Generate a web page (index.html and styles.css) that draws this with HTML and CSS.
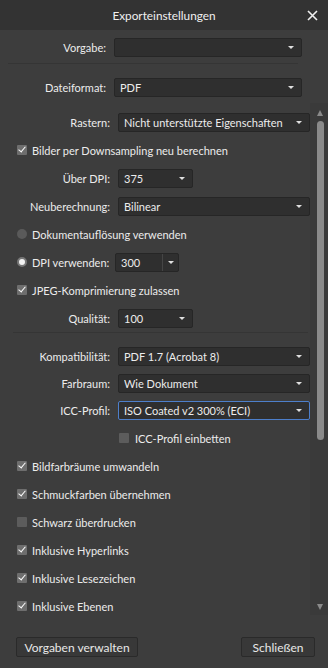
FILE: index.html
```html
<!DOCTYPE html>
<html>
<head>
<meta charset="utf-8">
<link rel="stylesheet" href="styles.css">
</head>
<body>
<div class="dialog">
  <div class="titlebar">
    <span class="title">Exporteinstellungen</span>
    <svg class="close" width="11" height="11" viewBox="0 0 11 11"><path d="M1 1L10 10M10 1L1 10" stroke="#f0f0f0" stroke-width="1.6"/></svg>
  </div>

  <div class="top">
    <div class="row trow">
      <span class="lbl tlbl">Vorgabe:</span>
      <div class="select tsel"><span class="val"></span><i class="arr"></i></div>
    </div>
    <div class="sep sep-top"></div>
    <div class="row trow trow2">
      <span class="lbl tlbl">Dateiformat:</span>
      <div class="select tsel"><span class="val">PDF</span><i class="arr"></i></div>
    </div>
  </div>

  <div class="scrollwrap">
    <div class="content">
      <div class="row">
        <span class="lbl">Rastern:</span>
        <div class="select wide"><span class="val">Nicht unterstützte Eigenschaften</span><i class="arr"></i></div>
      </div>
      <div class="row">
        <span class="cb on"></span><span class="txt">Bilder per Downsampling neu berechnen</span>
      </div>
      <div class="row">
        <span class="lbl">Über DPI:</span>
        <div class="select short"><span class="val">375</span><i class="arr"></i></div>
      </div>
      <div class="row">
        <span class="lbl">Neuberechnung:</span>
        <div class="select wide"><span class="val">Bilinear</span><i class="arr"></i></div>
      </div>
      <div class="row">
        <span class="rb"></span><span class="txt">Dokumentauflösung verwenden</span>
      </div>
      <div class="row">
        <span class="rb on"></span><span class="txt dpil">DPI verwenden:</span>
        <div class="combo"><span class="val">300</span><span class="cbtn"><i class="arr"></i></span></div>
      </div>
      <div class="row">
        <span class="cb on"></span><span class="txt">JPEG-Komprimierung zulassen</span>
      </div>
      <div class="row">
        <span class="lbl">Qualität:</span>
        <div class="select short"><span class="val">100</span><i class="arr"></i></div>
      </div>
      <div class="sep sep-mid"></div>
      <div class="row r27">
        <span class="lbl">Kompatibilität:</span>
        <div class="select wide"><span class="val">PDF 1.7 (Acrobat 8)</span><i class="arr"></i></div>
      </div>
      <div class="row r27">
        <span class="lbl">Farbraum:</span>
        <div class="select wide"><span class="val">Wie Dokument</span><i class="arr"></i></div>
      </div>
      <div class="row r27">
        <span class="lbl">ICC-Profil:</span>
        <div class="select wide focus"><span class="val">ISO Coated v2 300% (ECI)</span><i class="arr"></i></div>
      </div>
      <div class="row indent">
        <span class="cb"></span><span class="txt">ICC-Profil einbetten</span>
      </div>
      <div class="row">
        <span class="cb on"></span><span class="txt">Bildfarbräume umwandeln</span>
      </div>
      <div class="row">
        <span class="cb on"></span><span class="txt">Schmuckfarben übernehmen</span>
      </div>
      <div class="row">
        <span class="cb"></span><span class="txt">Schwarz überdrucken</span>
      </div>
      <div class="row">
        <span class="cb on"></span><span class="txt">Inklusive Hyperlinks</span>
      </div>
      <div class="row">
        <span class="cb on"></span><span class="txt">Inklusive Lesezeichen</span>
      </div>
      <div class="row">
        <span class="cb on"></span><span class="txt">Inklusive Ebenen</span>
      </div>
    </div>
    <div class="scrollbar">
      <i class="sarr up"></i>
      <div class="thumb"></div>
      <i class="sarr down"></i>
    </div>
  </div>

  <div class="footer">
    <button class="btn btn-l">Vorgaben verwalten</button>
    <button class="btn btn-r">Schließen</button>
  </div>
</div>
</body>
</html>
```
FILE: styles.css
```css
html, body {
  margin: 0;
  padding: 0;
  background: #3d3d3d;
}
body {
  font-family: Lato, "Open Sans", sans-serif;
  font-size: 11px;
  color: #ececec;
  width: 328px;
  height: 668px;
  overflow: hidden;
}
.dialog {
  display: flex;
  flex-direction: column;
  height: 668px;
}
.titlebar {
  height: 30px;
  flex: none;
  background: #333333;
  display: flex;
  align-items: center;
  justify-content: center;
  position: relative;
}
.title {
  font-size: 11.8px;
  color: #f0f0f0;
}
.close {
  position: absolute;
  right: 10px;
  top: 10px;
}
.top {
  padding-top: 8px;
  flex: none;
}
.row {
  display: flex;
  align-items: center;
  height: 28px;
}
.trow {
  height: 19px;
}
.trow2 {
  margin-top: 14px;
}
.lbl {
  width: 118px;
  text-align: right;
  padding-right: 8px;
  box-sizing: border-box;
  flex: none;
  white-space: nowrap;
}
.tlbl {
  width: 114px;
}
.select {
  height: 19px;
  box-sizing: border-box;
  background: #2f2f2f;
  border: 1px solid #262626;
  border-radius: 2px;
  display: flex;
  align-items: center;
  padding: 0 7px 0 5px;
  flex: none;
}
.select .val {
  flex: 1;
  white-space: nowrap;
  overflow: hidden;
}
.tsel {
  width: 188px;
}
.wide {
  width: 192px;
}
.short {
  width: 75px;
}
.focus {
  border-color: #4d7fcb;
}
.arr {
  display: block;
  width: 0;
  height: 0;
  border-left: 3px solid transparent;
  border-right: 3px solid transparent;
  border-top: 3px solid #e0e0e0;
  flex: none;
}
.sep {
  height: 1px;
  background: #353535;
}
.sep-top {
  margin: 6px 30px 0 8px;
}
.sep-mid {
  margin: 0 2px 10px 13px;
}
.scrollwrap {
  margin-top: 6px;
  height: 512px;
  flex: none;
  display: flex;
  overflow: hidden;
}
.content {
  width: 310px;
  flex: none;
  padding-top: 5px;
  box-sizing: border-box;
}
.r27 {
  height: 27px;
}
.cb {
  width: 10px;
  height: 10px;
  margin-left: 17px;
  margin-right: 5px;
  border-radius: 1px;
  background: #5c5c5c;
  flex: none;
  position: relative;
}
.cb.on {
  background: #6e6e6e;
}
.cb.on::after {
  content: "";
  position: absolute;
  left: 3px;
  top: 0px;
  width: 3px;
  height: 6px;
  border-right: 1.6px solid #ffffff;
  border-bottom: 1.6px solid #ffffff;
  transform: rotate(40deg);
}
.indent .cb {
  margin-left: 119px;
  margin-right: 6px;
}
.rb {
  width: 10px;
  height: 10px;
  border-radius: 50%;
  margin-left: 17px;
  margin-right: 5px;
  background: #5a5a5a;
  flex: none;
  box-sizing: border-box;
}
.rb.on {
  background: #f2f2f2;
  border: 2px solid #777777;
}
.txt {
  white-space: nowrap;
}
.dpil {
  width: 83px;
  flex: none;
}
.combo {
  width: 64px;
  height: 19px;
  box-sizing: border-box;
  background: #2f2f2f;
  border: 1px solid #262626;
  border-radius: 2px;
  display: flex;
  align-items: center;
  flex: none;
}
.combo .val {
  flex: 1;
  padding-left: 5px;
}
.cbtn {
  width: 15px;
  height: 100%;
  border-left: 1px solid #454545;
  display: flex;
  align-items: center;
  justify-content: center;
}
.scrollbar {
  width: 18px;
  flex: none;
  background: #3a3a3a;
  display: flex;
  flex-direction: column;
  align-items: center;
  padding: 7px 0 5px 2px;
  box-sizing: border-box;
}
.sarr {
  display: block;
  width: 0;
  height: 0;
  border-left: 3.5px solid transparent;
  border-right: 3.5px solid transparent;
}
.sarr.up {
  border-bottom: 6px solid #8a8a8a;
}
.sarr.down {
  border-top: 6px solid #8a8a8a;
  margin-top: auto;
}
.thumb {
  width: 7px;
  height: 319px;
  margin-top: 5px;
  background: #8a8a8a;
  border-radius: 4px;
}
.footer {
  display: flex;
  justify-content: space-between;
  padding: 22px 13px 0 16px;
}
.btn {
  height: 20px;
  padding: 0;
  font-family: Lato, "Open Sans", sans-serif;
  font-size: 12px;
  color: #e8e8e8;
  background: #383838;
  border: 1px solid #2a2a2a;
  border-radius: 2px;
  white-space: nowrap;
}
.btn-l {
  width: 122px;
}
.btn-r {
  width: 74px;
}
```
